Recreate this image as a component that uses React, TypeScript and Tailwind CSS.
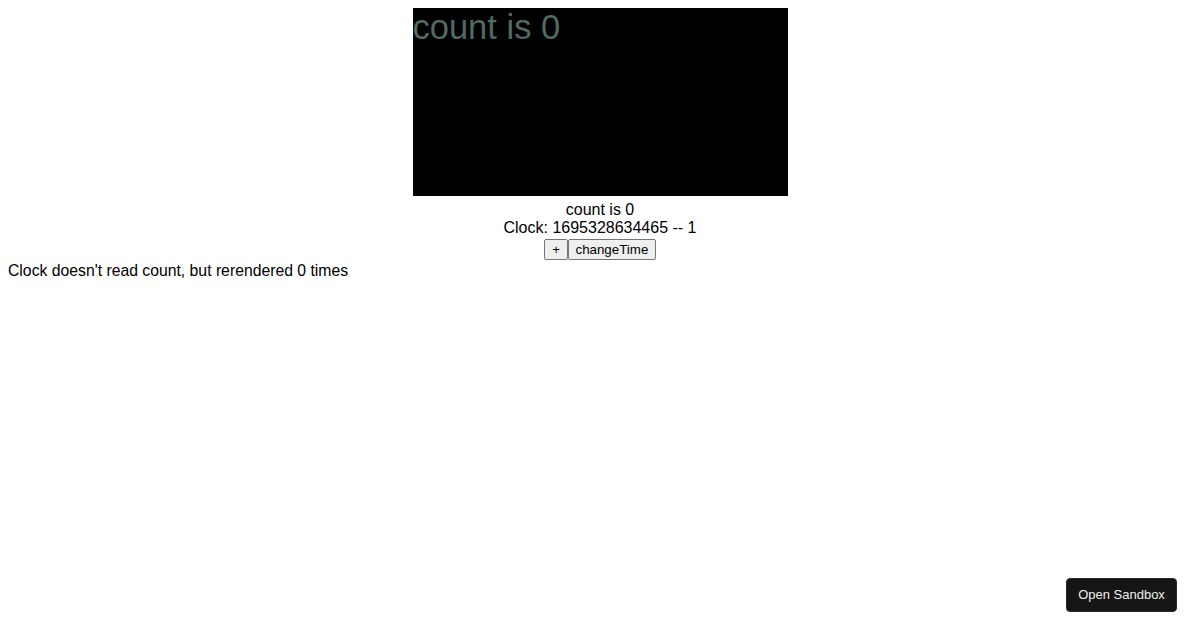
export default function App() {
  return (
    <div className="relative w-[1200px] h-[630px] bg-white text-black p-2 font-['Liberation_Sans',Arial,sans-serif] text-[16px]">
      <div className="flex flex-col items-center">
        <div className="w-[375px] h-[188px] bg-black mb-[5px]">
          <div className="text-[34.5px] leading-none pt-[2px] text-[#4f6b63] font-['Liberation_Sans',Arial,sans-serif]">count is 0</div>
        </div>
        <div className="leading-[18.4px] h-[18.4px]">count is 0</div>
        <div className="leading-[18.4px] h-[18.4px]">Clock: 1695328634465 -- 1</div>
        <div className="flex mt-[1px]">
          <button className="h-[21px] px-[7px] text-[13.33px] leading-none bg-[#efefef] border border-[#767676] rounded-[2px] font-['Liberation_Sans',Arial,sans-serif]">+</button>
          <button className="h-[21px] px-[6.5px] text-[13.33px] leading-none bg-[#efefef] border border-[#767676] rounded-[2px] font-['Liberation_Sans',Arial,sans-serif]">changeTime</button>
        </div>
      </div>
      <div className="leading-[18.4px] mt-[2px] text-[15.75px]">Clock doesn't read count, but rerendered 0 times</div>
      <div className="absolute right-[23px] bottom-[18px] w-[111px] h-[34px] flex items-center justify-center rounded-[4px] bg-[#151515] text-[#f0f0f0] text-[13px] border border-[#2a2a2a] font-['Liberation_Sans',Arial,sans-serif]">
        Open Sandbox
      </div>
    </div>
  );
}
